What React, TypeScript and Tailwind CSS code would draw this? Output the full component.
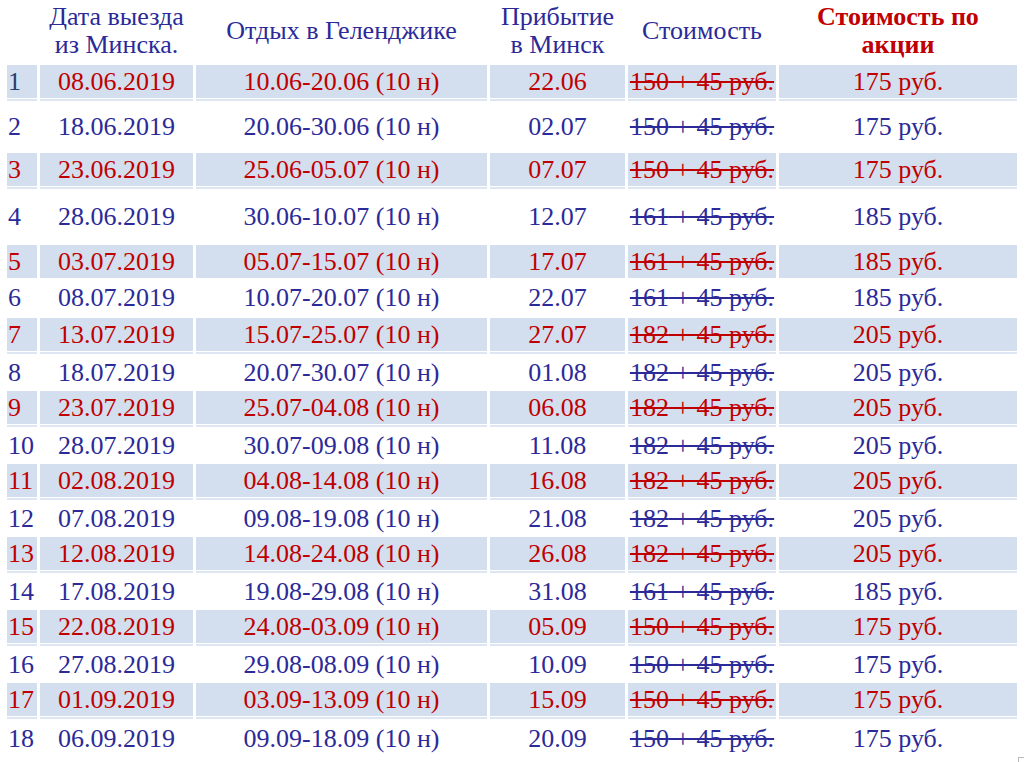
const BLUE = 'text-[#2b2a98]'
const RED = 'text-[#c00000]'

type Row = {
  n: number
  dep: string
  stay: string
  arr: string
  old: string
  price: string
  h?: number
  line?: boolean
}

const rows: Row[] = [
  { n: 1, dep: '08.06.2019', stay: '10.06-20.06', arr: '22.06', old: '150', price: '175' },
  { n: 2, dep: '18.06.2019', stay: '20.06-30.06', arr: '02.07', old: '150', price: '175', h: 52 },
  { n: 3, dep: '23.06.2019', stay: '25.06-05.07', arr: '07.07', old: '150', price: '175' },
  { n: 4, dep: '28.06.2019', stay: '30.06-10.07', arr: '12.07', old: '161', price: '185', h: 56 },
  { n: 5, dep: '03.07.2019', stay: '05.07-15.07', arr: '17.07', old: '161', price: '185', line: false },
  { n: 6, dep: '08.07.2019', stay: '10.07-20.07', arr: '22.07', old: '161', price: '185', h: 40 },
  { n: 7, dep: '13.07.2019', stay: '15.07-25.07', arr: '27.07', old: '182', price: '205' },
  { n: 8, dep: '18.07.2019', stay: '20.07-30.07', arr: '01.08', old: '182', price: '205' },
  { n: 9, dep: '23.07.2019', stay: '25.07-04.08', arr: '06.08', old: '182', price: '205' },
  { n: 10, dep: '28.07.2019', stay: '30.07-09.08', arr: '11.08', old: '182', price: '205' },
  { n: 11, dep: '02.08.2019', stay: '04.08-14.08', arr: '16.08', old: '182', price: '205' },
  { n: 12, dep: '07.08.2019', stay: '09.08-19.08', arr: '21.08', old: '182', price: '205' },
  { n: 13, dep: '12.08.2019', stay: '14.08-24.08', arr: '26.08', old: '182', price: '205' },
  { n: 14, dep: '17.08.2019', stay: '19.08-29.08', arr: '31.08', old: '161', price: '185' },
  { n: 15, dep: '22.08.2019', stay: '24.08-03.09', arr: '05.09', old: '150', price: '175' },
  { n: 16, dep: '27.08.2019', stay: '29.08-08.09', arr: '10.09', old: '150', price: '175' },
  { n: 17, dep: '01.09.2019', stay: '03.09-13.09', arr: '15.09', old: '150', price: '175' },
  { n: 18, dep: '06.09.2019', stay: '09.09-18.09', arr: '20.09', old: '150', price: '175', h: 40 },
]

const grid = 'grid grid-cols-[30px_153px_291px_135px_148px_238px] gap-x-[3px] pl-[7px]'

function TableRow({ r }: { r: Row }) {
  const shaded = r.n % 2 === 1
  const color = shaded ? RED : BLUE
  const cell = `flex items-center justify-center whitespace-nowrap ${shaded ? 'bg-[#d3deee]' : ''}`
  const numColor = r.n === 1 ? 'text-[#24406e]' : color

  return (
    <div>
      <div className={`${grid} ${color}`} style={{ height: shaded ? 33 : r.h ?? 37 }}>
        <div className={`${cell} !justify-start pl-[1px] ${numColor}`}>{r.n}</div>
        <div className={cell}>{r.dep}</div>
        <div className={cell}>{r.stay} (10 н)</div>
        <div className={cell}>{r.arr}</div>
        <div className={`${cell} line-through`}>{r.old} + 45 руб.</div>
        <div className={cell}>{r.price} руб.</div>
      </div>
      {shaded && r.line !== false && (
        <div className={`${grid} h-[3px] pt-[1px]`}>
          {[0, 1, 2, 3, 4, 5].map((i) => (
            <div key={i} className="bg-[#dde6f2]" />
          ))}
        </div>
      )}
    </div>
  )
}

export default function App() {
  return (
    <div className="relative w-[1029px] h-[762px] bg-white font-['Liberation_Serif',serif] text-[26px] leading-[28px] overflow-hidden">
      {/* Header */}
      <div className={`${grid} h-[62px] mb-[3px] text-center ${BLUE}`}>
        <div />
        <div className="flex flex-col items-center justify-center whitespace-nowrap">
          <span>Дата выезда</span>
          <span>из Минска.</span>
        </div>
        <div className="flex items-center justify-center whitespace-nowrap">Отдых в Геленджике</div>
        <div className="flex flex-col items-center justify-center whitespace-nowrap">
          <span>Прибытие</span>
          <span>в Минск</span>
        </div>
        <div className="flex items-center justify-center whitespace-nowrap">Стоимость</div>
        <div className={`flex flex-col items-center justify-center whitespace-nowrap font-bold ${RED}`}>
          <span>Стоимость по</span>
          <span>акции</span>
        </div>
      </div>

      {rows.map((r) => (
        <TableRow key={r.n} r={r} />
      ))}

      <div className="absolute left-[1018px] top-[757px] w-[6px] h-[6px] border-l border-t border-[#b8b8b8]" />
    </div>
  )
}
